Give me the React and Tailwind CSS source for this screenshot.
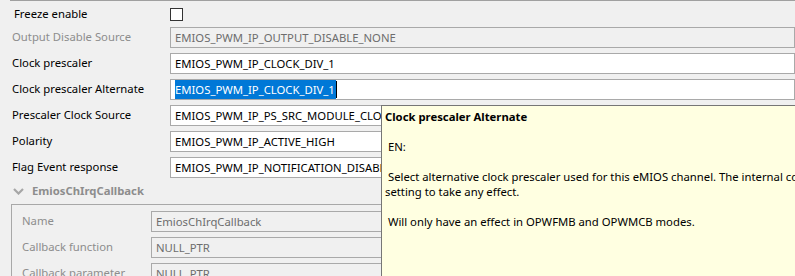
import React from "react";

const font = { fontFamily: '"Noto Sans", "Open Sans", sans-serif' };

function Field({ children, disabled, selected }) {
  return (
    <div
      className={`h-[21px] flex-1 border border-[#a9a9a9] pl-[4px] flex items-center whitespace-nowrap overflow-hidden text-[11.3px] ${
        disabled ? "bg-[#f0f0f0] text-[#6d6d6d]" : "bg-white text-black"
      }`}
    >
      {selected ? (
        <span className="flex items-center h-[19px]">
          <span className="bg-[#0078d7] text-white h-[19px] leading-[19px] pr-[1px]">{children}</span>
          <span className="w-px h-[17px] bg-black" />
        </span>
      ) : (
        <span className="leading-[19px]">{children}</span>
      )}
    </div>
  );
}

function Row({ label, disabled, labelWidth = "w-[158px]", children }) {
  return (
    <div className="flex items-center h-[21px]">
      <div
        className={`${labelWidth} shrink-0 text-[11.3px] whitespace-nowrap ${
          disabled ? "text-[#8d8d8d]" : "text-black"
        }`}
      >
        {label}
      </div>
      {children}
    </div>
  );
}

export default function App() {
  return (
    <div
      className="relative w-[795px] h-[276px] overflow-hidden bg-[#f0f0f0] select-none"
      style={font}
    >
      <div className="ml-[10px] h-px bg-[#a0a0a0]" />
      <div className="pl-[12px]">
        <div className="flex items-center h-[26px]">
          <div className="w-[158px] pl-[2px] text-[11.3px] text-black">Freeze enable</div>
          <div className="w-[13px] h-[13px] border border-[#333] bg-white" />
        </div>
        <div className="flex flex-col gap-[5px]">
          <Row label="Output Disable Source" disabled>
            <Field disabled>EMIOS_PWM_IP_OUTPUT_DISABLE_NONE</Field>
          </Row>
          <Row label="Clock prescaler">
            <Field>EMIOS_PWM_IP_CLOCK_DIV_1</Field>
          </Row>
          <Row label="Clock prescaler Alternate">
            <Field selected>EMIOS_PWM_IP_CLOCK_DIV_1</Field>
          </Row>
          <Row label="Prescaler Clock Source">
            <Field>EMIOS_PWM_IP_PS_SRC_MODULE_CLOCK</Field>
          </Row>
          <Row label="Polarity">
            <Field>EMIOS_PWM_IP_ACTIVE_HIGH</Field>
          </Row>
          <Row label="Flag Event response">
            <Field>EMIOS_PWM_IP_NOTIFICATION_DISABLED</Field>
          </Row>
        </div>
      </div>
      <div className="flex items-center h-[26px] pl-[13px]">
        <svg width="11" height="7" viewBox="0 0 11 7" className="mr-[8px]">
          <path d="M1 1 L5.5 5.5 L10 1" fill="none" stroke="#a6a6a6" strokeWidth="2.2" />
        </svg>
        <span className="text-[11.3px] font-bold text-[#8d8d8d]">EmiosChIrqCallback</span>
      </div>
      <div className="ml-[11px] border border-[#a8a8a8] pt-[6px] pl-[10px] h-[120px] flex flex-col gap-[5px]">
        <Row label="Name" disabled labelWidth="w-[129px]">
          <Field disabled>EmiosChIrqCallback</Field>
        </Row>
        <Row label="Callback function" disabled labelWidth="w-[129px]">
          <Field disabled>NULL_PTR</Field>
        </Row>
        <Row label="Callback parameter" disabled labelWidth="w-[129px]">
          <Field disabled>NULL_PTR</Field>
        </Row>
      </div>

      <div className="absolute left-[381px] top-[105px] w-[560px] h-[220px] bg-[#ffffe1] border border-[#767676] pt-[3px] pl-[3px] text-[11.3px] leading-[15px] text-black whitespace-pre">
        <div className="font-bold">Clock prescaler Alternate</div>
        <div>&nbsp;</div>
        <div> EN:</div>
        <div>&nbsp;</div>
        <div> Select alternative clock prescaler used for this eMIOS channel. The internal counter must be enabled for this</div>
        <div>setting to take any effect.</div>
        <div>&nbsp;</div>
        <div> Will only have an effect in OPWFMB and OPWMCB modes.</div>
      </div>
    </div>
  );
}
